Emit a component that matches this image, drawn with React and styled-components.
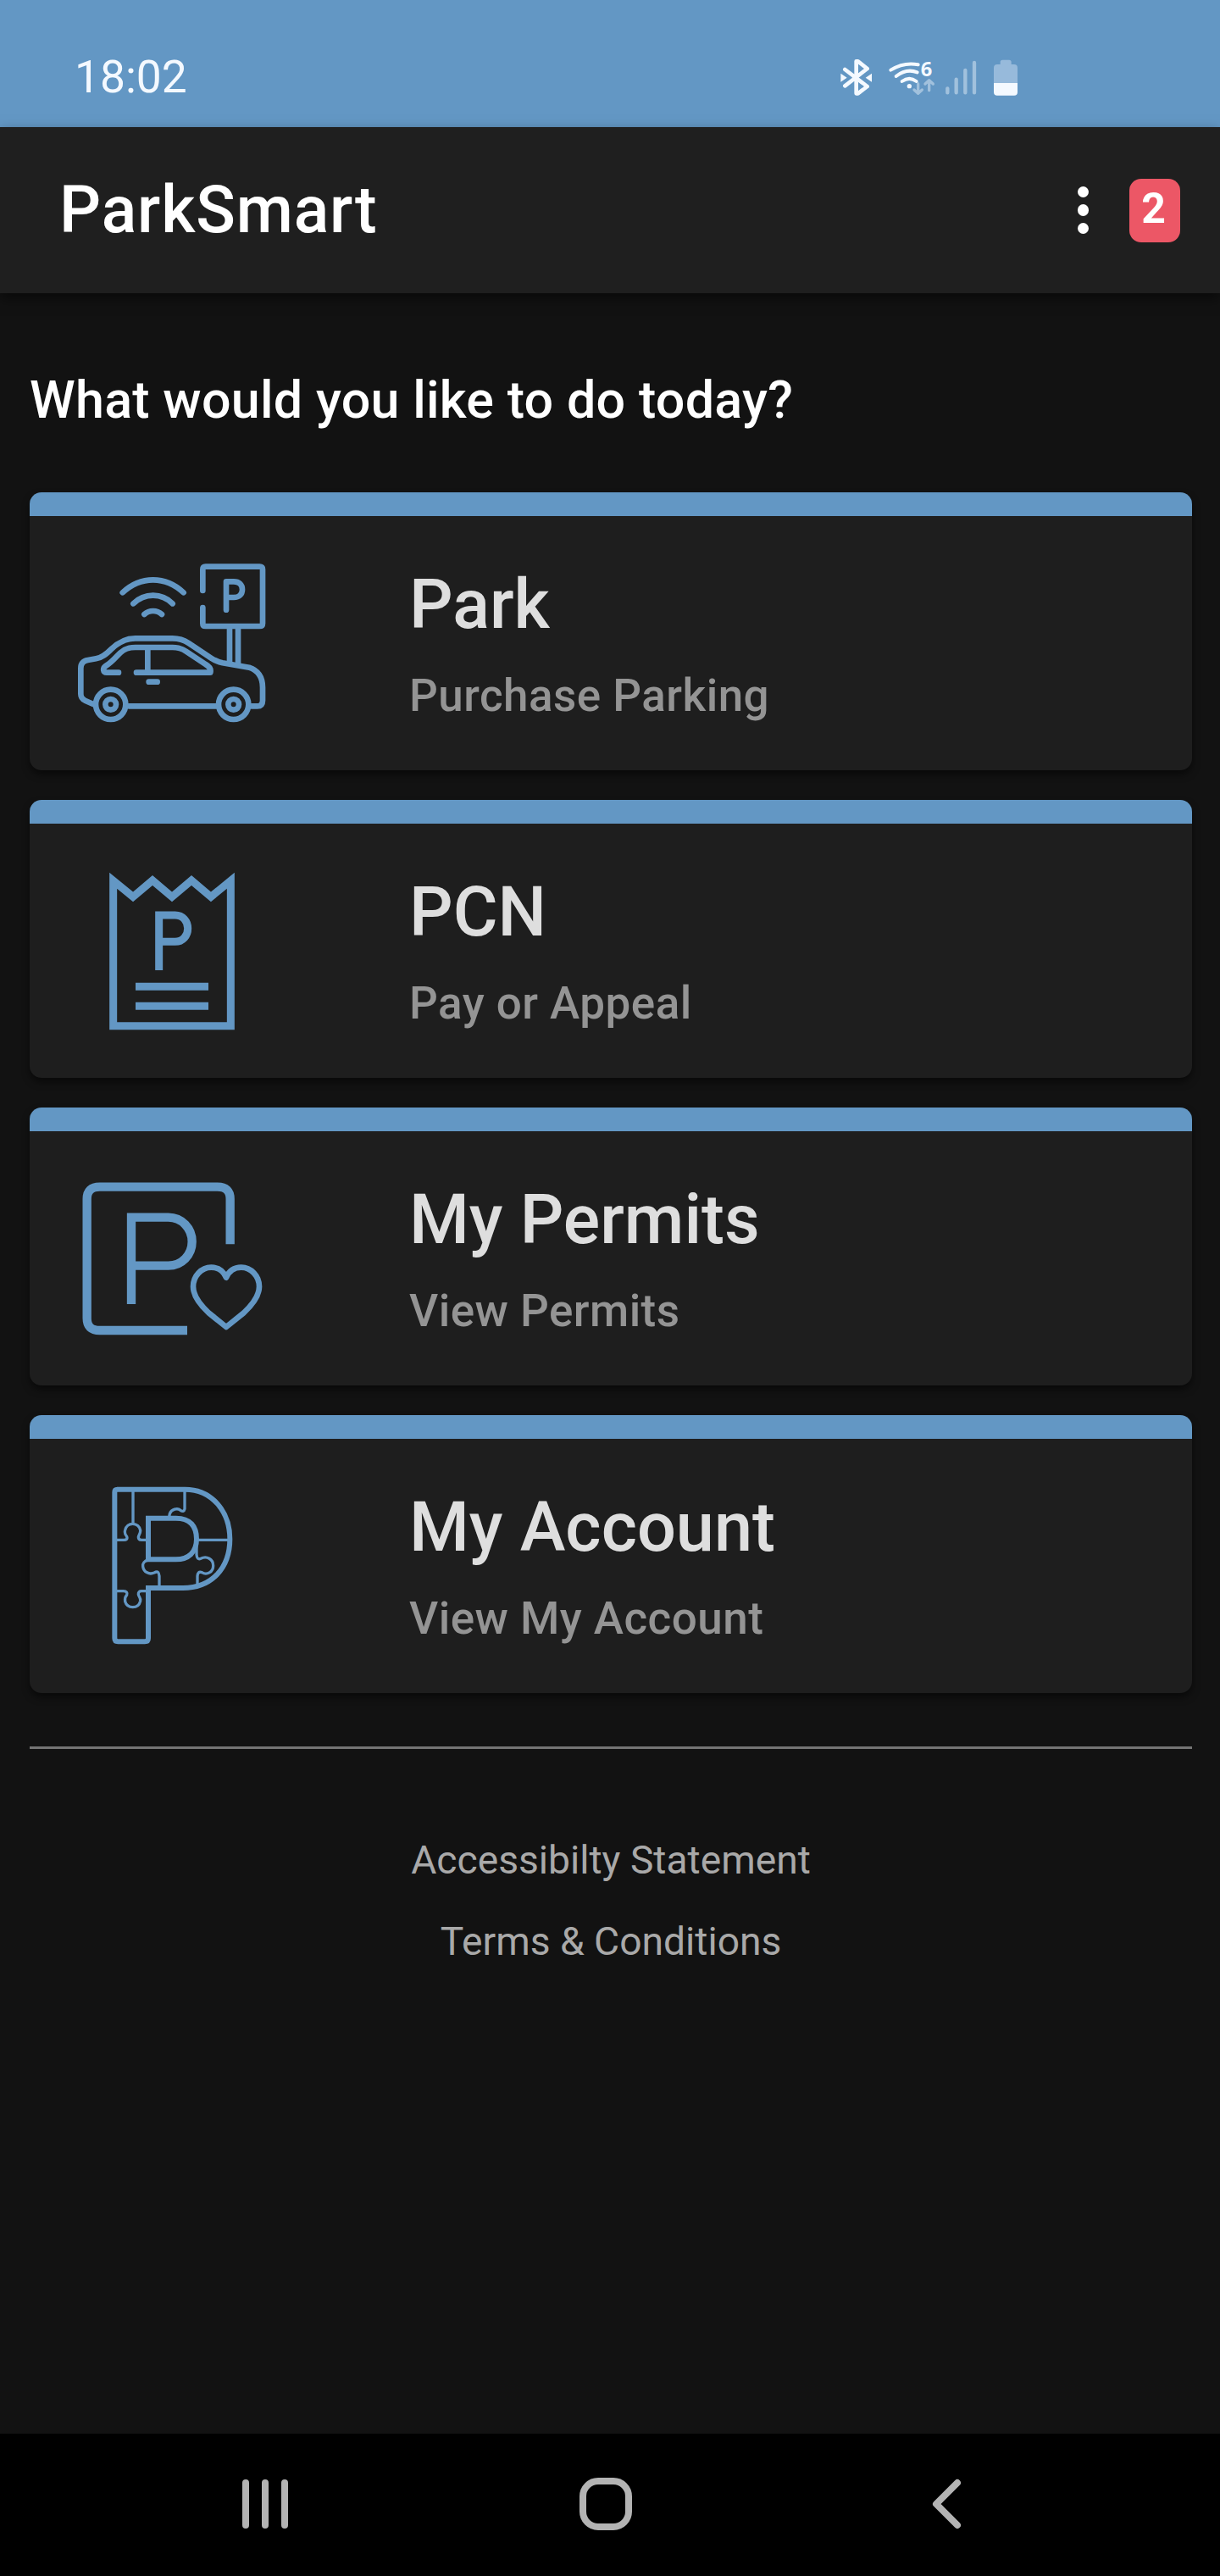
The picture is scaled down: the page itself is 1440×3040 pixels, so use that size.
import styled, { createGlobalStyle } from 'styled-components'

const theme = {
  primary: '#6397c4',
  background: '#121212',
  surface: '#1f1f1f',
  card: '#1e1e1e',
  danger: '#ec5766',
  text: '#ffffff',
  navIcon: '#b3b3b3'
}

const GlobalStyle = createGlobalStyle`
  * {
    box-sizing: border-box;
  }
  body {
    margin: 0;
    background: ${theme.background};
    font-family: Roboto, "Liberation Sans", sans-serif;
  }
`

const Screen = styled.div`
  width: 1440px;
  height: 3040px;
  display: flex;
  flex-direction: column;
  background: ${theme.background};
  color: ${theme.text};
  overflow: hidden;
`

const StatusBar = styled.div`
  flex: none;
  display: flex;
  align-items: center;
  justify-content: space-between;
  height: 150px;
  padding: 32px 200px 0 88px;
  background: ${theme.primary};
`

const Clock = styled.span`
  font-size: 53.3px;
  color: #f4f9ff;
`

const StatusIcons = styled.svg`
  width: 280px;
  height: 90px;
  margin-top: 8px;
`

const AppBar = styled.header`
  flex: none;
  display: flex;
  align-items: center;
  height: 196px;
  padding: 0 47px 0 70px;
  background: ${theme.surface};
  box-shadow: 0 6px 14px rgba(0, 0, 0, 0.5);
`

const AppTitle = styled.h1`
  flex: 1;
  margin: 0;
  font-size: 77px;
  font-weight: 500;
  letter-spacing: 0.9px;
`

const MenuDots = styled.div`
  display: flex;
  flex-direction: column;
  gap: 8px;
  margin-right: 48px;
  span {
    width: 13.5px;
    height: 13.5px;
    border-radius: 50%;
    background: ${theme.text};
  }
`

const Badge = styled.span`
  display: flex;
  align-items: center;
  justify-content: center;
  width: 60px;
  height: 75px;
  padding: 0 3px 5px 0;
  border-radius: 14px;
  background: ${theme.danger};
  font-size: 50px;
  font-weight: 700;
`

const Content = styled.main`
  flex: 1;
  padding: 90px 33px 0 35px;
`

const Question = styled.h2`
  margin: 0 0 73px;
  font-size: 61px;
  line-height: 72px;
  font-weight: 500;
  letter-spacing: 0.28px;
`

const CardList = styled.div`
  display: flex;
  flex-direction: column;
  gap: 35px;
`

const Card = styled.section`
  display: flex;
  height: 328px;
  padding: 31px 25px 0;
  border-top: 28px solid ${theme.primary};
  border-radius: 14px;
  background: ${theme.card};
  box-shadow: 0 5px 8px rgba(0, 0, 0, 0.5);
`

const CardIcon = styled.svg`
  flex: none;
  width: 290px;
  height: 230px;
  fill: none;
  stroke: ${theme.primary};
`

const CardText = styled.div`
  padding: 27px 0 0 133px;
`

const CardTitle = styled.h3`
  margin: 0 0 29px;
  font-size: 81px;
  line-height: 94px;
  font-weight: 500;
  color: #dedede;
`

const CardSubtitle = styled.p`
  margin: 0;
  font-size: 53px;
  line-height: 62px;
  font-weight: 500;
  letter-spacing: 0.47px;
  color: #949494;
`

const Divider = styled.hr`
  height: 3px;
  margin: 63px 0 103px;
  border: 0;
  background: #747474;
`

const Links = styled.div`
  display: flex;
  flex-direction: column;
  align-items: center;
  gap: 40px;
`

const FooterLink = styled.a`
  font-size: 46.2px;
  line-height: 56px;
  color: #a9a9a9;
`

const NavBar = styled.nav`
  flex: none;
  display: flex;
  align-items: center;
  justify-content: space-between;
  height: 168px;
  padding: 0 300px 2px 282px;
  background: #000;
`

const NavIcon = styled.svg`
  width: ${props => props.$width}px;
  height: 66px;
  fill: none;
  stroke: ${theme.navIcon};
  stroke-width: 8;
  stroke-linecap: round;
  stroke-linejoin: round;
`

const ParkIcon = () => (
  <CardIcon viewBox='0 0 870 690' strokeWidth='20' strokeLinecap='round' strokeLinejoin='round'>
    {/* signal */}
    <path d='M254 178Q302 133 362 133Q422 133 470 178M292 217Q322 188 362 188Q402 188 431 217M331 255Q344 243 362 243Q380 243 393 255' />
    {/* sign */}
    <path d='M538 171V96Q538 86 548 86H739Q750 86 750 96V287Q750 297 739 297H548Q538 297 538 287V231' />
    <path d='M621 239V139H648C667 139 678 150 678 167S667 195 648 195H621' />
    <path strokeLinecap='butt' d='M633 300V428M663 300V434' />
    {/* body */}
    <path d='M152 574L121 560Q106 552 106 537V446Q106 421 131 417L160 412C183 408 197 395 213 379Q253 340 299 340H431Q463 340 488 357L568 410Q588 423 608 427L702 443Q750 459 750 514V560Q750 580 731 580H710M276 580H586' />
    <path d='M240 461H198C184 461 183 446 194 438C217 425 229 407 246 391Q266 372 299 372H431Q458 372 479 386L548 432Q569 444 565 461H303M343 374V459M347 494H377' />
    <circle cx='212' cy='574' r='53' />
    <circle cx='212' cy='574' r='19' />
    <circle cx='647' cy='574' r='53' />
    <circle cx='647' cy='574' r='19' />
  </CardIcon>
)

const TicketIcon = () => (
  <CardIcon viewBox='-120 -21 870 690' strokeWidth='27' strokeMiterlimit='8'>
    <path d='M101 88L171 145L240 87L309 145L378 87L447 145L517 88V602H101Z' />
    <path d='M263 405V210H320C348 210 365 232 365 257S348 304 320 304H263M180 463H438M180 532H438' />
  </CardIcon>
)

const PermitIcon = () => (
  <CardIcon viewBox='-60 -42 870 690' strokeWidth='31'>
    <path d='M575 265V105Q575 62 530 62H113Q68 62 68 105V527Q68 570 113 570H423' />
    <path d='M225 477V170H356C404 170 440 209 440 256S404 341 356 341H225' />
    <path
      strokeWidth='20'
      strokeLinejoin='round'
      d='M561 383C551 360 532 347 508 347C473 347 444 378 444 415C444 451 470 481 499 508L561 558L623 508C652 481 678 451 678 415C678 378 649 347 614 347C590 347 571 360 561 383Z'
    />
  </CardIcon>
)

const AccountIcon = () => (
  <CardIcon viewBox='-150 -33 870 690' strokeWidth='18'>
    <path d='M84 53H325C421 53 484 132 484 229C484 331 420 402 318 402H195V580Q195 592 183 592H88Q76 592 76 580V63Q76 53 86 53Z' />
    <path d='M195 301V155H293C344 155 366 184 366 229C366 276 337 301 293 301H187' />
    {/* puzzle seams */}
    <g strokeWidth='10'>
      <path d='M141 58V175M76 232H109C118 232 122 228 119 220C110 211 112 201 113 197C116 183 127 175 140 175C154 175 165 185 167 198C168 209 161 214 160 222C160 229 165 232 171 232H190' />
      <path d='M324 60V122C322 132 316 132 309 127C298 117 277 124 271 139L269 150' />
      <path d='M368 232H478M366 229V284C367 297 372 302 381 298C402 287 425 300 425 323C425 346 402 358 385 347C374 343 370 349 369 360V390' />
      <path d='M195 303C181 306 174 316 176 326C179 346 199 356 216 348C229 341 233 347 234 360V398' />
      <path d='M76 413H107C118 413 122 419 119 427C110 436 112 444 113 450C117 463 127 470 140 470C154 470 164 461 167 448C169 437 161 433 160 425C159 417 164 413 171 413H190' />
    </g>
  </CardIcon>
)

const cards = [
  { title: 'Park', subtitle: 'Purchase Parking', Icon: ParkIcon },
  { title: 'PCN', subtitle: 'Pay or Appeal', Icon: TicketIcon },
  { title: 'My Permits', subtitle: 'View Permits', Icon: PermitIcon },
  { title: 'My Account', subtitle: 'View My Account', Icon: AccountIcon }
]

const App = () => {
  return (
    <Screen>
      <GlobalStyle />
      <StatusBar>
        <Clock>18:02</Clock>
        <StatusIcons viewBox='0 0 840 270' fill='none' stroke='#f4f9ff' strokeLinecap='round' strokeLinejoin='round'>
          {/* bluetooth */}
          <path strokeWidth='14' d='M112 96L191 156L158 181H152V67H158L191 93L112 154' />
          <path fill='#f4f9ff' stroke='none' d='M97 110L119 125L97 140ZM207 110L185 125L207 140Z' />
          {/* wifi */}
          <path strokeWidth='12' d='M274 98Q321 69 371 79M293 120Q330 91 368 106M314 138Q340 119 365 138' />
          <circle cx='340' cy='155' r='8' fill='#f4f9ff' stroke='none' />
          <text x='380' y='119' fill='#f4f9ff' stroke='none' fontFamily='Open Sans, sans-serif' fontSize='71' fontWeight='700'>6</text>
          <g stroke='#a1c1dd' strokeWidth='10'>
            <path d='M371 146V180M357 168L371 181L385 168M410 170V136M396 147L410 134L424 147' />
            <path strokeWidth='13' d='M475 163V178M506 131V178M538 99V178M570 72V178' />
          </g>
          {/* battery */}
          <path fill='#97badb' stroke='none' d='M662 78V70Q662 62 670 62H693Q701 62 701 70V78H711Q723 78 723 90V145H639V90Q639 78 651 78Z' />
          <path fill='#f4f9ff' stroke='none' d='M639 144H723V177Q723 188 711 188H651Q639 188 639 177Z' />
        </StatusIcons>
      </StatusBar>

      <AppBar>
        <AppTitle>ParkSmart</AppTitle>
        <MenuDots>
          <span />
          <span />
          <span />
        </MenuDots>
        <Badge>2</Badge>
      </AppBar>

      <Content>
        <Question>What would you like to do today?</Question>
        <CardList>
          {cards.map(({ title, subtitle, Icon }) => (
            <Card key={title}>
              <Icon />
              <CardText>
                <CardTitle>{title}</CardTitle>
                <CardSubtitle>{subtitle}</CardSubtitle>
              </CardText>
            </Card>
          ))}
        </CardList>
        <Divider />
        <Links>
          <FooterLink>Accessibilty Statement</FooterLink>
          <FooterLink>Terms &amp; Conditions</FooterLink>
        </Links>
      </Content>

      <NavBar>
        <NavIcon $width={62} viewBox='0 0 62 66'>
          <path d='M8 8V58M31 8V58M54 8V58' />
        </NavIcon>
        <NavIcon $width={76} viewBox='0 0 76 66'>
          <rect x='6' y='6' width='54' height='54' rx='18' />
        </NavIcon>
        <NavIcon $width={44} viewBox='0 0 44 66'>
          <path d='M34 8L9 33L34 58' />
        </NavIcon>
      </NavBar>
    </Screen>
  )
}

export default App
